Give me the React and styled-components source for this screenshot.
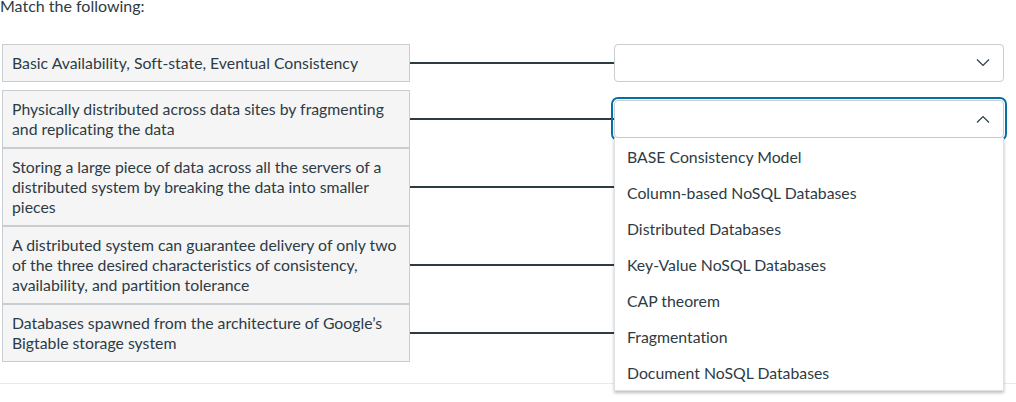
import React from "react";
import styled, { createGlobalStyle } from "styled-components";

const GlobalStyle = createGlobalStyle`
  body {
    margin: 0;
    background: #ffffff;
    font-family: Lato, "Noto Sans", sans-serif;
    font-variant-ligatures: none;
    color: #2d3b45;
    overflow: hidden;
  }
`;

const prompts = [
  "Basic Availability, Soft-state, Eventual Consistency",
  "Physically distributed across data sites by fragmenting and replicating the data",
  "Storing a large piece of data across all the servers of a distributed system by breaking the data into smaller pieces",
  "A distributed system can guarantee delivery of only two of the three desired characteristics of consistency, availability, and partition tolerance",
  "Databases spawned from the architecture of Google’s Bigtable storage system",
];

const options = [
  "BASE Consistency Model",
  "Column-based NoSQL Databases",
  "Distributed Databases",
  "Key-Value NoSQL Databases",
  "CAP theorem",
  "Fragmentation",
  "Document NoSQL Databases",
];

const Chevron = ({ up }) => (
  <svg width="14" height="8" viewBox="0 0 14 8">
    <polyline
      points={up ? "1,7.5 7,1.5 13,7.5" : "1,0.5 7,6.5 13,0.5"}
      fill="none"
      stroke="#2d3b45"
      strokeWidth="1.2"
    />
  </svg>
);

const App = () => {
  const openIndex = 1;

  return (
    <Page>
      <GlobalStyle />
      <Title>Match the following:</Title>
      <List>
        {prompts.map((text, index) => (
          <Row key={index}>
            <Pair>
              <Prompt>{text}</Prompt>
              <Connector />
              <SelectWrap>
                <Select focused={index === openIndex}>
                  <Chevron up={index === openIndex} />
                </Select>
                {index === openIndex && (
                  <Menu>
                    {options.map((opt) => (
                      <MenuItem key={opt}>{opt}</MenuItem>
                    ))}
                  </Menu>
                )}
              </SelectWrap>
            </Pair>
          </Row>
        ))}
      </List>
      <Divider />
    </Page>
  );
};

export default App;

const Page = styled.div`
  width: 1016px;
  height: 402px;
`;

const Title = styled.div`
  margin-top: -4px;
  font-size: 16px;
  line-height: 20px;
  height: 20px;
`;

const List = styled.div`
  margin-top: 28px;
  padding-left: 2px;
`;

const Row = styled.div`
  min-height: 46px;
`;

const Pair = styled.div`
  display: flex;
  align-items: center;
`;

const Prompt = styled.div`
  box-sizing: border-box;
  width: 408px;
  padding: 8px 2px 8px 9px;
  background: #f5f5f5;
  border: 1px solid #c7cdd1;
  font-size: 15.8px;
  line-height: 20px;
`;

const Connector = styled.div`
  width: 204px;
  height: 2px;
  background: #2d3b45;
`;

const SelectWrap = styled.div`
  position: relative;
  width: 390px;
`;

const Select = styled.div`
  box-sizing: border-box;
  height: 38px;
  display: flex;
  align-items: center;
  justify-content: flex-end;
  padding-right: 13px;
  background: #ffffff;
  border: 1px solid #c7cdd1;
  border-radius: 4px;
  outline: ${(props) => (props.focused ? "2px solid #0770a3" : "none")};
  outline-offset: 1px;
`;

const Menu = styled.div`
  position: absolute;
  z-index: 2;
  top: 38px;
  left: 0;
  right: 0;
  background: #ffffff;
  border: 1px solid #dfe2e4;
  border-top: none;
  box-shadow: 0 2px 3px rgba(0, 0, 0, 0.25);
`;

const MenuItem = styled.div`
  height: 36px;
  display: flex;
  align-items: center;
  padding-left: 12px;
  font-size: 15.8px;
`;

const Divider = styled.div`
  margin-top: 21px;
  height: 1px;
  background: #e8eaec;
`;
